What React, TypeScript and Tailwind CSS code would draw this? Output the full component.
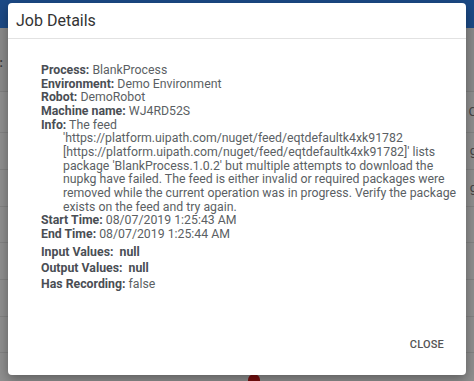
import React from 'react'

const rows = [
  { h: 41, text: 'C' },
  { h: 37, text: 'g' },
  { h: 37, text: 'g' },
  { h: 36, text: '' },
  { h: 37, text: '' },
  { h: 37, text: '' },
  { h: 36, text: '' },
  { h: 40, text: '' },
]

function Field({ label, children, boldValue }: { label: string; children: React.ReactNode; boldValue?: boolean }) {
  return (
    <div>
      <span className="font-bold text-[#4a4e54]">{label}</span>{' '}
      <span className={boldValue ? 'font-bold text-[#4a4e54]' : 'text-[#5b5f64]'}>{children}</span>
    </div>
  )
}

export default function App() {
  return (
    <div
      className="relative w-[474px] h-[381px] overflow-hidden bg-[#8f8f8f]"
      style={{ fontFamily: 'Roboto, "Liberation Sans", sans-serif' }}
    >
      {/* dimmed page behind the dialog */}
      <div className="h-[28px] bg-[#1c4a86]" />
      <div className="h-[64px] bg-[#8a8a8a] flex items-center border-b border-[#7f7f7f]">
        <span className="text-[12px] font-bold text-[#3a3a3a] -ml-[10px] mt-[6px]">al:</span>
      </div>
      {rows.map((r, i) => (
        <div
          key={i}
          className="flex items-center justify-end border-b border-[#828282] text-[13px] text-[#444]"
          style={{ height: r.h }}
        >
          <span className="-mr-[3px]">{r.text}</span>
        </div>
      ))}
      <div className="absolute left-[248px] top-[374px] w-[12px] h-[12px] rounded-full bg-[#7a1010]" />

      {/* dialog */}
      <div className="absolute left-[8px] top-[3px] w-[458px] h-[372px] bg-white rounded-[4px] shadow-[0_4px_12px_rgba(0,0,0,0.35)] flex flex-col">
        <div className="h-[36px] flex items-center pl-[8px] border-b border-[#e2e2e2]">
          <span className="text-[16px] text-[#333] leading-none mt-[1px]">Job Details</span>
        </div>
        <div className="flex-1 pl-[33px] pr-[2px] pt-[25px] text-[12.3px] leading-[13.67px]">
          <Field label="Process:">BlankProcess</Field>
          <Field label="Environment:">Demo Environment</Field>
          <Field label="Robot:">DemoRobot</Field>
          <Field label="Machine name:">WJ4RD52S</Field>
          <Field label="Info:">The feed</Field>
          <div className="pl-[22px] text-[#5b5f64]">
            'https://platform.uipath.com/nuget/feed/eqtdefaultk4xk91782 [https://platform.uipath.com/nuget/feed/eqtdefaultk4xk91782]'
            lists package 'BlankProcess.1.0.2' but multiple attempts to download the nupkg have failed. The feed is either invalid or
            required packages were removed while the current operation was in progress. Verify the package exists on the feed and
            try again.
          </div>
          <Field label="Start Time:">08/07/2019 1:25:43 AM</Field>
          <Field label="End Time:">08/07/2019 1:25:44 AM</Field>
          <div className="mt-[2px] leading-[16px]">
            <Field label={'Input Values:\u00a0'} boldValue>
              null
            </Field>
            <Field label={'Output Values:\u00a0'} boldValue>
              null
            </Field>
            <Field label="Has Recording:">false</Field>
          </div>
        </div>
        <div className="flex justify-end pr-[22px] pb-[22px]">
          <button className="text-[11px] font-medium text-[#555] tracking-[0.2px]">CLOSE</button>
        </div>
      </div>
    </div>
  )
}
